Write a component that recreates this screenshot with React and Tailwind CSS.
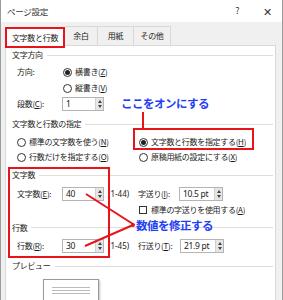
import React from "react";

const Radio = ({ checked }) => (
  <span className="flex h-[9px] w-[9px] shrink-0 items-center justify-center rounded-full border border-[#333] bg-white">
    {checked && <span className="h-[5px] w-[5px] rounded-full bg-[#222]" />}
  </span>
);

const Spin = ({ value, className = "w-[42px]" }) => (
  <div className={`flex h-[14px] items-stretch border border-[#b4b4b4] bg-white ${className}`}>
    <span className="flex-1 pl-[3px] text-[8.5px] leading-[12px] font-['Noto_Sans',sans-serif]">{value}</span>
    <span className="flex w-[8px] flex-col items-center justify-center gap-[2px] border-l border-[#d0d0d0] bg-[#e6e6e6]">
      <span className="h-0 w-0 border-x-[2.5px] border-b-[3px] border-x-transparent border-b-[#444]" />
      <span className="h-0 w-0 border-x-[2.5px] border-t-[3px] border-x-transparent border-t-[#444]" />
    </span>
  </div>
);

const Header = ({ children, className = "h-[18px]" }) => (
  <div className={`flex items-center pl-[6px] pr-[2px] ${className}`}>
    <span>{children}</span>
    <span className="ml-[4px] h-px flex-1 bg-[#dedede]" />
  </div>
);

const Key = ({ k }) => (
  <>
    (<span className="underline">{k}</span>)
  </>
);

export default function App() {
  return (
    <div className="relative flex h-[300px] w-[283px] flex-col overflow-hidden border-x border-[#9a9a9a] bg-[#f0f0f0] text-[8px] tracking-[-0.3px] text-[#1a1a1a] font-['Noto_Sans_CJK_JP','Noto_Sans',sans-serif]">
      {/* title bar */}
      <div className="flex h-[22px] shrink-0 items-center bg-white pl-[6px]">
        <span className="text-[8.5px] text-[#333]">ページ設定</span>
        <span className="ml-auto mr-[24px] text-[9px] text-[#333]">?</span>
        <span className="mr-[10px] text-[11px] font-light text-[#333]">✕</span>
      </div>

      {/* tabs */}
      <div className="relative z-10 flex h-[23px] shrink-0 items-end pl-[4px]">
        <div className="-mb-[3px] flex h-[21px] w-[60px] items-center justify-center border-2 border-[#e8141c] bg-white">
          文字数と行数
        </div>
        <div className="flex h-[19px] w-[33px] items-center justify-center border-r border-t border-[#d9d9d9]">余白</div>
        <div className="flex h-[19px] w-[36px] items-center justify-center border-r border-t border-[#d9d9d9]">用紙</div>
        <div className="flex h-[19px] w-[37px] items-center justify-center border-r border-t border-[#d9d9d9]">その他</div>
      </div>

      {/* panel */}
      <div className="ml-[4px] flex w-[271px] flex-1 flex-col border border-[#d9d9d9] bg-white">
        <Header>文字方向</Header>
        <div className="flex h-[16px] items-center pl-[11px]">
          <span className="w-[46px]">方向:</span>
          <Radio checked />
          <span className="ml-[3px]">横書き<Key k="Z" /></span>
        </div>
        <div className="flex h-[16px] items-center pl-[57px]">
          <Radio />
          <span className="ml-[3px]">縦書き<Key k="V" /></span>
        </div>
        <div className="flex h-[16px] items-center pl-[11px]">
          <span className="w-[45px]">段数<Key k="C" />:</span>
          <Spin value="1" />
        </div>

        <Header className="h-[24px]">文字数と行数の指定</Header>
        <div className="flex h-[12px] items-center pl-[11px]">
          <div className="flex w-[122px] items-center">
            <Radio />
            <span className="ml-[3px]">標準の文字数を使う<Key k="N" /></span>
          </div>
          <Radio checked />
          <span className="ml-[3px]">文字数と行数を指定する<Key k="H" /></span>
        </div>
        <div className="flex h-[18px] items-center pl-[11px]">
          <div className="flex w-[122px] items-center">
            <Radio />
            <span className="ml-[3px]">行数だけを指定する<Key k="O" /></span>
          </div>
          <Radio />
          <span className="ml-[3px]">原稿用紙の設定にする<Key k="X" /></span>
        </div>

        <Header>文字数</Header>
        <div className="flex h-[20px] items-center pl-[11px]">
          <span className="w-[45px]">文字数<Key k="E" />:</span>
          <Spin value="40" />
          <span className="ml-[4px] w-[30px] font-['Noto_Sans',sans-serif] tracking-normal">(1-44)</span>
          <span className="w-[41px]">字送り<Key k="I" />:</span>
          <Spin value="10.5 pt" className="w-[44px]" />
        </div>
        <div className="flex h-[12px] items-center pl-[133px]">
          <span className="h-[8px] w-[8px] border border-[#333] bg-white" />
          <span className="ml-[4px]">標準の字送りを使用する<Key k="A" /></span>
        </div>

        <Header className="h-[23px]">行数</Header>
        <div className="flex h-[14px] items-center pl-[11px]">
          <span className="w-[45px]">行数<Key k="R" />:</span>
          <Spin value="30" />
          <span className="ml-[4px] w-[30px] font-['Noto_Sans',sans-serif] tracking-normal">(1-45)</span>
          <span className="w-[42px]">行送り<Key k="T" />:</span>
          <Spin value="21.9 pt" className="w-[44px]" />
        </div>

        <Header className="h-[26px]">プレビュー</Header>
        <div className="ml-[37px] flex h-[40px] w-[56px] flex-col gap-[2px] border border-[#9a9a9a] bg-white px-[8px] pt-[7px] shadow-[1px_1px_2px_rgba(0,0,0,0.25)]">
          <span className="h-px bg-[#bbb]" />
          <span className="h-px bg-[#bbb]" />
          <span className="h-px bg-[#bbb]" />
        </div>
      </div>

      {/* annotations */}
      <div className="absolute left-[132px] top-[128px] h-[22px] w-[121px] border-2 border-[#e8141c]" />
      <div className="absolute left-[7px] top-[167px] h-[91px] w-[102px] border-2 border-[#e8141c]" />
      <span className="absolute left-[120px] top-[95px] text-[11.5px] font-bold tracking-[-0.5px] text-[#1f3df5]">ここをオンにする</span>
      <span className="absolute left-[135px] top-[217px] text-[11.5px] font-bold tracking-[-0.5px] text-[#1f3df5]">数値を修正する</span>
      <svg className="pointer-events-none absolute left-0 top-0" width="283" height="300">
        <line x1="142" y1="112" x2="142" y2="129" stroke="#e8141c" strokeWidth="2" />
        <line x1="85" y1="194" x2="132" y2="224" stroke="#e8141c" strokeWidth="2" />
        <line x1="84" y1="246" x2="132" y2="225" stroke="#e8141c" strokeWidth="2" />
        <circle cx="132" cy="225" r="2" fill="#e8141c" />
      </svg>
    </div>
  );
}
